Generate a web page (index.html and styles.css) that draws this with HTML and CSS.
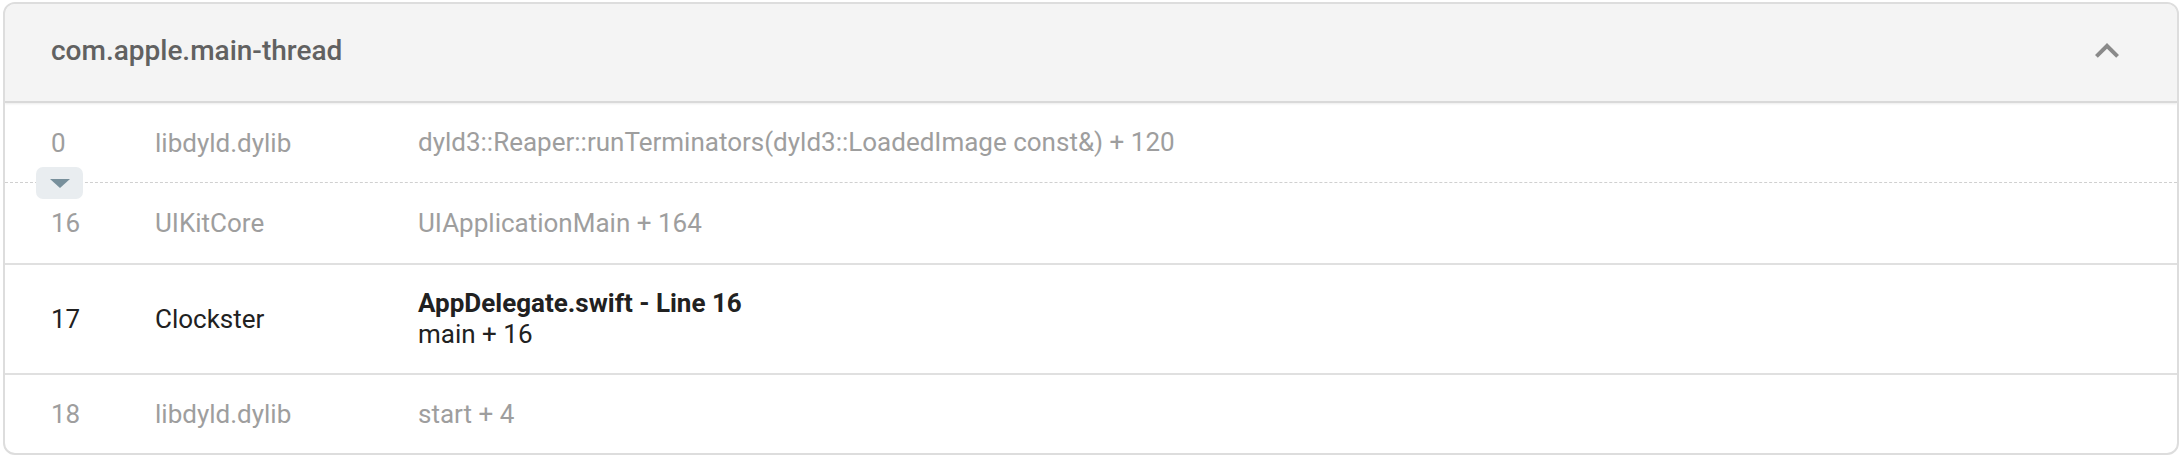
FILE: index.html
```html
<!DOCTYPE html>
<html>
<head>
<meta charset="utf-8">
<link rel="stylesheet" href="styles.css">
</head>
<body>
<div class="card">
  <div class="header">
    <span class="title">com.apple.main-thread</span>
    <svg class="chev" width="48" height="48" viewBox="0 0 24 24"><path d="M12 8l-6 6 1.41 1.41L12 10.83l4.59 4.58L18 14z" fill="#8a8a8a"/></svg>
  </div>
  <div class="row row-first">
    <span class="idx">0</span>
    <span class="lib">libdyld.dylib</span>
    <span class="sym">dyld3::Reaper::runTerminators(dyld3::LoadedImage const&amp;) + 120</span>
    <button class="expand" type="button"><svg width="20" height="9" viewBox="0 0 20 9"><path d="M0 0H20L10 9Z" fill="#78909c"/></svg></button>
  </div>
  <div class="row row-mid">
    <span class="idx">16</span>
    <span class="lib">UIKitCore</span>
    <span class="sym">UIApplicationMain + 164</span>
  </div>
  <div class="row row-own">
    <span class="idx">17</span>
    <span class="lib">Clockster</span>
    <span class="sym"><b class="file">AppDelegate.swift - Line 16</b><span class="fn">main + 16</span></span>
  </div>
  <div class="row row-last">
    <span class="idx">18</span>
    <span class="lib">libdyld.dylib</span>
    <span class="sym">start + 4</span>
  </div>
</div>
</body>
</html>
```
FILE: styles.css
```css
html, body {
  margin: 0;
  padding: 0;
  background: #ffffff;
}
body {
  padding: 2px 0 0 3px;
  font-family: Roboto, "Liberation Sans", sans-serif;
}
.card {
  width: 2176px;
  box-sizing: border-box;
  border: 2px solid #dddddd;
  border-radius: 12px;
  overflow: hidden;
  background: #ffffff;
}
.header {
  height: 97px;
  box-sizing: border-box;
  background: #f4f4f4;
  border-bottom: 2px solid #d9d9d9;
  box-shadow: 0 1px 2px rgba(0,0,0,0.08);
  display: flex;
  align-items: center;
  justify-content: space-between;
  padding: 0 46px 3px 46px;
  height: 99px;
  position: relative;
  z-index: 1;
}
.title {
  font-size: 28px;
  font-weight: 500;
  color: #616161;
  margin-bottom: 1px;
}
.chev {
  display: block;
}
.row {
  display: grid;
  grid-template-columns: 104px 263px 1fr;
  align-items: center;
  padding: 0 45px 0 46px;
  font-size: 26px;
  color: #9e9e9e;
  position: relative;
}
.row-first {
  height: 79px;
  border-bottom: 1px dashed #d0d0d0;
}
.row-mid {
  height: 80px;
  border-bottom: 2px solid #e0e0e0;
}
.row-own {
  height: 108px;
  border-bottom: 2px solid #e0e0e0;
  color: #212121;
}
.row-last {
  height: 78px;
}
.sym {
  display: flex;
  flex-direction: column;
  line-height: 31px;
}
.file {
  font-weight: 700;
}
.expand {
  position: absolute;
  left: 31px;
  bottom: -17px;
  width: 47px;
  height: 32px;
  border: 0;
  padding: 0;
  border-radius: 7px;
  background: #e9edf0;
  display: flex;
  align-items: center;
  justify-content: center;
  z-index: 2;
}
.expand svg {
  display: block;
}
```
